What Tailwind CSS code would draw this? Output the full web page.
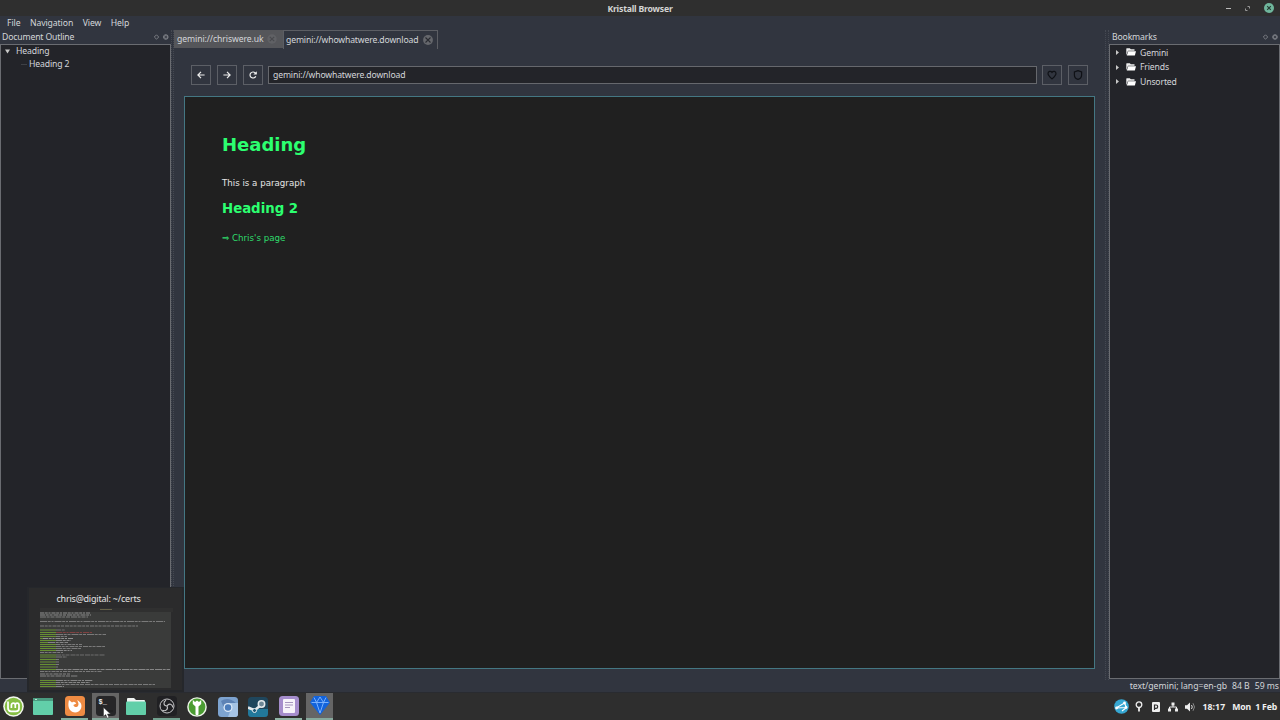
<!DOCTYPE html>
<html lang="en">

<head>
    <meta charset="UTF-8">
    <meta name="viewport" content="width=device-width, initial-scale=1.0">
    <title>Kristall Browser</title>
    <script src="https://cdn.jsdelivr.net/npm/@tailwindcss/browser@4"></script>
</head>

<body class="relative w-[1280px] h-[720px] overflow-hidden flex flex-col bg-[#31353f] text-[#d3d5d9] font-['Noto_Sans',sans-serif] text-[8.67px] tracking-[-0.15px] leading-none whitespace-nowrap">
    <!-- title bar -->
    <header class="h-4 shrink-0 grid grid-cols-3 items-center bg-[#2f2f2f]">
        <div></div>
        <h1 class="pt-[2px] text-center font-bold tracking-[-0.2px] text-[#d4d4d4]">Kristall Browser</h1>
        <div class="flex justify-end items-center gap-[13px] pr-[6px]">
            <div class="w-[5px] h-px bg-[#bbb]"></div>
            <svg class="w-[7px] h-[7px]" viewBox="0 0 7 7" fill="none" stroke="#999"><path d="M3.5 1.5h2v2M1.5 3.500v2h2" /></svg>
            <svg class="w-[10px] h-[10px]" viewBox="0 0 10 10"><circle cx="5" cy="5" r="5" fill="#6fb69c" /><path d="M3.2 3.2l3.6 3.6M6.8 3.2L3.2 6.8" stroke="#263c34" stroke-width="1.2" /></svg>
        </div>
    </header>
    <!-- menu -->
    <nav class="h-[14px] shrink-0 flex items-center gap-[9.5px] pl-[7px] pt-px tracking-[-0.1px]">
        <span>File</span>
        <span>Navigation</span>
        <span>View</span>
        <span>Help</span>
    </nav>

    <main class="h-[650px] shrink-0 flex">
        <!-- outline dock -->
        <aside class="w-[171px] flex flex-col">
            <div class="h-[14px] flex items-center pl-[2px] pr-[2px]">
                <span class="grow">Document Outline</span>
                <svg class="w-[15px] h-[6px]" viewBox="0 0 15 6" fill="none" stroke="#8b8e94" stroke-width=".8"><path d="M2.500 .8L4.700 3L2.500 5.200L.3 3Z" /><circle cx="11.800" cy="3" r="2.300" fill="#686b72" /><path d="M10.600 1.800l2.400 2.400m0-2.400l-2.400 2.400" stroke="#31353f" /></svg>
            </div>
            <div class="h-[635px] border border-[#6a6c71] bg-[#232429]">
                <div class="h-[12px] flex items-center pl-[4px] gap-[6px]">
                    <svg class="w-[5px] h-[5px]" viewBox="0 0 5 5"><path d="M0 .5h5L2.5 4.5z" fill="#c8c8c8" /></svg>
                    <span>Heading</span>
                </div>
                <div class="h-[14px] flex items-center pl-[20px] gap-[2px] pt-px">
                    <div class="w-[6px] h-px bg-[#3e4045]"></div>
                    <span>Heading 2</span>
                </div>
            </div>
        </aside>
        <div class="w-[3px] border-x border-dotted border-[#454952]"></div>

        <!-- browser -->
        <section class="w-[931px] flex flex-col">
            <div class="h-[20px] flex">
                <div class="w-[109px] h-[18px] flex items-center justify-between pl-[3px] pr-[6px] bg-[#55565a]">
                    <span class="tracking-[-0.1px]">gemini://chriswere.uk</span>
                    <svg class="shrink-0 w-[10px] h-[10px]" viewBox="0 0 10 10"><circle cx="5" cy="5" r="4.7" fill="#606165" /><path d="M2.8 2.8l4.4 4.4M7.2 2.8L2.8 7.2" stroke="#494a4e" stroke-width="1.2" /></svg>
                </div>
                <div class="w-[155px] h-[19px] flex items-center justify-between pl-[2px] pr-[4px] pb-px border-x border-t border-[#5c5e64]">
                    <span class="pt-px">gemini://whowhatwere.download</span>
                    <svg class="shrink-0 w-[10px] h-[10px]" viewBox="0 0 10 10"><circle cx="5" cy="5" r="4.9" fill="#65676c" /><path d="M2.5 2.5l5 5M7.5 2.5l-5 5" stroke="#292b31" stroke-width="1.1" /></svg>
                </div>
            </div>
            <div class="h-[46px] flex items-center pl-[17px] pr-[17px] pt-[4px] pb-px gap-[6px]">
                <button class="w-5 h-5 shrink-0 flex items-center justify-center border border-[#5c5f66]">
                    <svg class="w-[8px] h-[8px]" viewBox="0 0 8 8" fill="none" stroke="#eee" stroke-width="1.2"><path d="M7.6 4H1M4 .9L.9 4L4 7.1" /></svg>
                </button>
                <button class="w-5 h-5 shrink-0 flex items-center justify-center border border-[#5c5f66]">
                    <svg class="w-[8px] h-[8px]" viewBox="0 0 8 8" fill="none" stroke="#eee" stroke-width="1.2"><path d="M.4 4H7M4 .9L7.1 4L4 7.1" /></svg>
                </button>
                <button class="w-5 h-5 shrink-0 flex items-center justify-center border border-[#5c5f66]">
                    <svg class="w-[8px] h-[8px]" viewBox="0 0 8 8" fill="none" stroke="#eee" stroke-width="1.2"><path d="M6.8 5.2A3 3 0 1 1 6.2 1.9L7 2.7" /><path d="M7.8 .2V3.6H4.4Z" fill="#eee" stroke="none" /></svg>
                </button>
                <div class="grow h-[18px] -ml-px -mr-px flex items-center pl-[4px] pt-[2px] border border-[#66686d] bg-[#232429]">gemini://whowhatwere.download</div>
                <button class="w-5 h-5 shrink-0 flex items-center justify-center border border-[#5c5f66]">
                    <svg class="shrink-0 w-[10px] h-[10px]" viewBox="0 0 10 10" fill="none" stroke="#0f1116" stroke-width="1.2"><path d="M5 8.9C2.5 6.8 1 5.4 1 3.5C1 1.2 3.8 .6 5 2.4C6.2 .6 9 1.2 9 3.5C9 5.4 7.5 6.8 5 8.900Z" /></svg>
                </button>
                <button class="w-5 h-5 shrink-0 flex items-center justify-center border border-[#5c5f66]">
                    <svg class="shrink-0 w-[10px] h-[10px]" viewBox="0 0 10 10" fill="none" stroke="#0f1116" stroke-width="1.2"><path d="M5 .6L8.6 1.9V5C8.6 7.2 7 8.8 5 9.4C3 8.8 1.4 7.2 1.4 5V1.9Z" /></svg>
                </button>
            </div>
            <article class="w-[911px] h-[573px] ml-[10px] pl-[37px] border border-[#447783] bg-[#202020] font-['DejaVu_Sans',sans-serif] tracking-normal">
                <h1 class="mt-[37px] text-[18px] leading-[22px] font-bold text-[#2cff70]">Heading</h1>
                <p class="mt-[21px] text-[8.67px] leading-[12px] text-[#e6e6e6]">This is a paragraph</p>
                <h2 class="mt-[11px] text-[13.3px] leading-[17px] font-bold text-[#2cff70]">Heading 2</h2>
                <a class="block mt-[15px] text-[8.67px] leading-[12px] text-[#2fdc6c]">⇒ Chris's page</a>
            </article>
        </section>
        <div class="w-[4px] border-x border-dotted border-[#454952]"></div>

        <!-- bookmarks dock -->
        <aside class="w-[171px] flex flex-col">
            <div class="h-[14px] flex items-center pl-[3px]">
                <span class="grow">Bookmarks</span>
                <svg class="w-[19px] h-[6px]" viewBox="0 0 19 6" fill="none" stroke="#8b8e94" stroke-width=".8"><path d="M4.500 .8L6.700 3L4.500 5.200L2.300 3Z" /><circle cx="14" cy="3" r="2.300" fill="#686b72" /><path d="M12.800 1.800l2.400 2.400m0-2.400l-2.400 2.400" stroke="#31353f" /></svg>
            </div>
            <ul id="bookmarks" class="h-[635px] border border-[#6a6c71] bg-[#232429]"></ul>
        </aside>
    </main>

    <footer class="h-[12px] shrink-0 flex items-center justify-end gap-[5px] pt-px pr-px tracking-[-0.02px]">
        <span>text/gemini; lang=en-gb</span>
        <span>84 B</span>
        <span>59 ms</span>
    </footer>

    <!-- panel -->
    <div class="h-[28px] shrink-0 flex items-center justify-between bg-[#2e2e2e] border-t border-[#292b30]">
        <div class="h-full flex items-stretch">
            <div class="w-[28px] flex items-center justify-center pr-[2px]">
                <svg class="w-[21px] h-[21px]" viewBox="0 0 21 21"><circle cx="10.5" cy="10.5" r="10.3" fill="#f3f7ee" /><circle cx="10.5" cy="10.5" r="8.8" fill="#86be43" /><path d="M5 5.5V12C5 14.3 6.3 15.3 8 15.3H13C15 15.3 16 14.2 16 12.4V9.2C16 6.3 12.3 6.3 12.3 9.2V12M12.3 9.2C12.3 6.3 8.4 6.3 8.4 9.2V12" fill="none" stroke="#fff" stroke-width="1.7" /></svg>
            </div>
            <div class="w-[33px] flex items-center justify-center pr-[4px]">
                <svg class="w-[20px] h-[17px]" viewBox="0 0 20 17"><rect width="20" height="17" rx="1" fill="#62cfa9" /><path d="M0 1a1 1 0 0 1 1-1h18a1 1 0 0 1 1 1v2H0z" fill="#4a9b80" /><path d="M2 1.5h2" stroke="#bde7d8" /></svg>
            </div>
            <div class="w-[27px] flex items-center justify-center border-b-2 border-[#7fae9c]">
                <svg class="w-[20px] h-[20px]" viewBox="0 0 20 20"><rect width="20" height="20" rx="3.5" fill="#ee8b43" /><path d="M4 4L7 6.4C9 5.2 10 6.2 11.3 7.4L8.3 9C9 11.2 12 12 13.2 9.5C14 7.8 13.2 6 12 4.2C15.8 5.6 17.4 9 16 12.5C14.4 16.5 9 17.7 5.8 14.8C3 12.2 3 8.2 4 4Z" fill="#fff" /></svg>
            </div>
            <div class="w-[27px] ml-[4px] flex items-center justify-center bg-[#656565] border-b-2 border-[#86a99c]">
                <svg class="w-[20px] h-[20px]" viewBox="0 0 20 20"><rect width="20" height="20" rx="3.5" fill="#262628" /><path d="M7 15h10" stroke="#1c1c1d" /><text x="2.6" y="7.8" font-family="Liberation Mono, monospace" font-size="7" font-weight="bold" fill="#eee">$_</text></svg>
            </div>
            <div class="w-[34px] flex items-center justify-center">
                <svg class="w-[20px] h-[17px]" viewBox="0 0 20 17"><path d="M1 1Q1 0 2 0H8L10 2H18Q19 2 19 3V8H1Z" fill="#f1f5f3" /><rect y="3.5" width="20" height="13.5" rx="1" fill="#62cfa9" /></svg>
            </div>
            <div class="w-[27px] flex items-center justify-center border-b-2 border-[#72a18f]">
                <svg class="w-[20px] h-[20px]" viewBox="0 0 20 20" fill="none" stroke="#c3c3c5"><rect width="20" height="20" rx="3.5" fill="#202023" stroke="none" /><circle cx="10" cy="10" r="7" /><path d="M10 10C6.3 9.8 6 6 9 4.2M10 10C12 6.8 15.6 8.2 15.8 11.5M10 10C11.6 13.3 8.5 15.8 5.3 14.2" stroke-width="1.1" /></svg>
            </div>
            <div class="w-[34px] flex items-center justify-center">
                <svg class="w-[20px] h-[20px]" viewBox="0 0 20 20"><circle cx="10" cy="10" r="9.8" fill="#edf4e8" /><circle cx="10" cy="10" r="8.4" fill="#4b9c32" /><path d="M5.8 3L8 5L10 3.4L12 5L14.2 3V7L11.5 9.5V17.5L10 18.8L8.5 17.5V9.5L5.8 7Z" fill="#fff" /></svg>
            </div>
            <div class="w-[27px] flex items-center justify-center">
                <svg class="w-[20px] h-[20px]" viewBox="0 0 20 20"><rect width="20" height="20" rx="3.5" fill="#7da3cf" /><path d="M3 4Q10 -1 18 6H10Q6 6 5.5 10Z" fill="#5e83b5" /><path d="M13 12L10 20H17Q20 20 20 17V6H10Z" fill="#a5c3e4" /><circle cx="10" cy="10.5" r="4.5" fill="#dbe8f6" /><circle cx="10" cy="10.5" r="3.2" fill="#4d7dbb" /></svg>
            </div>
            <div class="w-[34px] flex items-center justify-center">
                <svg class="w-[20px] h-[20px]" viewBox="0 0 20 20"><rect width="20" height="20" rx="3.5" fill="#1f465c" /><path d="M0 12H20V16.5Q20 20 16.5 20H3.5Q0 20 0 16.5Z" fill="#22789a" /><path d="M0 10.5L6 13M7.5 12.5L12.5 8.5" stroke="#e4e9ec" stroke-width="2.6" /><circle cx="6.5" cy="13.5" r="2" fill="#1d5773" stroke="#e4e9ec" /><circle cx="13.5" cy="7" r="3.2" fill="#6d8796" stroke="#e4e9ec" stroke-width="1.5" /></svg>
            </div>
            <div class="w-[27px] flex items-center justify-center border-b-2 border-[#8fb4a5]">
                <svg class="w-[20px] h-[20px]" viewBox="0 0 20 20"><rect width="20" height="20" rx="3.5" fill="#a58dcc" /><rect x="4" y="3" width="12" height="14" rx="1" fill="#f6f3fa" /><path d="M6 6.5h8M6 9h8M6 11.5h5" stroke="#a595bd" /></svg>
            </div>
            <div class="w-[27px] ml-[4px] flex items-center justify-center bg-[#656565] border-b-2 border-[#86a99c]">
                <svg class="w-[20px] h-[19px]" viewBox="0 0 20 19"><path d="M4 0H16L20 6.5L10 19L0 6.5Z" fill="#1263dc" /><path d="M1.5 6.5H18.5M4 1.5L6.5 6.5L10 1L13.5 6.5L16 1.5M6.5 6.5L10 17L13.5 6.5" fill="none" stroke="#83b8ff" stroke-width=".9" /></svg>
            </div>
        </div>
        <div class="flex items-center pr-[3px] font-bold text-[#f0f0f0]">
            <svg class="w-[15px] h-[15px] mr-[6px]" viewBox="0 0 15 15"><circle cx="7.5" cy="7.5" r="7.3" fill="#36a7d2" /><path d="M2 9L10.5 4L12.5 8.5ZM12.5 8.5L8 12" fill="none" stroke="#fff" stroke-width="1.1" /><circle cx="10.5" cy="4" r="1.4" fill="#fff" /><circle cx="2.6" cy="9" r="1.4" fill="#fff" /><circle cx="12" cy="8.5" r="1.4" fill="#fff" /></svg>
            <svg class="w-[8px] h-[11px] mr-[9px]" viewBox="0 0 8 11" fill="none" stroke="#eee" stroke-width="1.3"><circle cx="4" cy="3.7" r="2.8" /><path d="M4 6.5V10.5" stroke-width="1.8" /></svg>
            <svg class="w-[8px] h-[10px] mr-[8px]" viewBox="0 0 8 10"><rect width="8" height="10" rx="1" fill="#eee" /><path d="M2.5 8V3H4A1.7 1.7 0 0 1 4 6.4H2.5" fill="none" stroke="#2e2e2e" stroke-width="1.2" /></svg>
            <svg class="w-[10px] h-[10px] mr-[7px]" viewBox="0 0 10 10"><path d="M3.5 .5h3v3h-3zM0 6.5h3v3H0zM7 6.5h3v3H7z" fill="#eee" /><path d="M5 3V5M1.5 7V5H8.5V7" fill="none" stroke="#eee" /></svg>
            <svg class="w-[11px] h-[10px] mr-[6px]" viewBox="0 0 11 10"><path d="M0 3.2H2L5 .5V9.5L2 6.8H0Z" fill="#eee" /><path d="M6.5 3Q8 5 6.5 7" fill="none" stroke="#ddd" /><path d="M8 1.2Q11 5 8 8.8" fill="none" stroke="#888" /></svg>
            <span class="mr-[7px] pt-[2px] tracking-[0.1px]">18:17</span>
            <span class="pt-[2px]">Mon&nbsp; 1 Feb</span>
        </div>
    </div>

    <!-- window preview over the panel -->
    <div class="absolute left-[27px] top-[587px] w-[157px] h-[105px] bg-[#25272b] px-[2px] pt-[1px]">
        <div class="h-[102px] flex flex-col items-center bg-[#2b2b2c]">
            <div class="h-[20px] flex items-center pr-[14px] text-[9px] tracking-[-0.2px] text-[#e4e4e4]">chris@digital: ~/certs</div>
            <svg class="w-[133px] h-[81px] ml-[2px]" viewBox="0 0 133 81">
                <rect width="133" height="4" fill="#303030" />
                <path d="M60 1.5h12" stroke="#76704f" stroke-width=".8" />
                <rect y="4" width="131" height="76" fill="#3a3b3a" />
                <g id="terminal" opacity=".85"></g>
            </svg>
        </div>
    </div>

    <svg class="absolute left-[103px] top-[707px] w-[8px] h-[12px]" viewBox="0 0 8 12"><path d="M.5 .5V9.5L2.7 7.6L4.2 11.2L6 10.4L4.5 7H7.5Z" fill="#fff" stroke="#333" stroke-width=".5" /></svg>

    <script>
        const bookmarks = document.getElementById('bookmarks');
        const terminal = document.getElementById('terminal');

        ['Gemini', 'Friends', 'Unsorted'].forEach(name => {
            const item = document.createElement('li');
            item.className = 'h-[14.7px] flex items-center pl-[6px]';
            item.innerHTML = `
                <svg class="w-[3px] h-[5px] mr-[7px]" viewBox="0 0 3 5"><path d="M0 0L3 2.5L0 5z" fill="#c8c8c8" /></svg>
                <svg class="w-[10px] h-[8px] mr-[4px]" viewBox="0 0 10 8"><path d="M.3 7.2V.8Q.3 .3 .8 .3H3.8L4.8 1.3H8.5V2.7H2L.8 6Z" fill="#eee" /><path d="M2.2 3.2H10L8.8 7.5H.8Z" fill="#fff" /></svg>
                <span class="pt-px">${name}</span>`;
            bookmarks.appendChild(item);
        });

        // [y, prompt width, text end, color]
        const lines = [
            [5, 0, 50, '#b5b5b5'], [7, 0, 51, '#b5b5b5'], [9, 0, 48, '#a0a0a0'],
            [13.5, 0, 125, '#999'], [18, 0, 98, '#999'], [22, 16, 25, '#888'],
            [24.5, 16, 52, '#a34545'], [26.5, 16, 66, '#999'], [28.5, 16, 27, '#999'],
            [30.5, 3, 33, '#bbb'], [32.5, 16, 31, '#aaa'], [34.5, 8, 28, '#aaa'],
            [36.5, 16, 42, '#999'], [38.5, 16, 65, '#999'], [40.5, 16, 41, '#999'],
            [42.5, 16, 32, '#aaa'], [44.5, 0, 23, '#999'], [47, 16, 65, '#888'],
            [49, 16, 27, '#999'], [51.5, 16, 19, '#999'], [54, 16, 19, '#999'],
            [56.5, 16, 19, '#999'], [59, 16, 18, '#999'], [61.5, 16, 130, '#aaa'],
            [63.5, 0, 62, '#999'], [66, 0, 30, '#aaa'], [68, 0, 38, '#aaa'],
            [72.5, 16, 53, '#aaa'], [74.5, 16, 50, '#aaa'], [76.5, 16, 115, '#999'],
            [78.5, 16, 24, '#aaa']
        ];
        let strokes = '';
        lines.forEach(([y, prompt, end, color], i) => {
            if (prompt) {
                strokes += `<path d="M0 ${y}H${prompt}" stroke="#6f9e32" stroke-width="1" />`;
            }
            strokes += `<path d="M${prompt} ${y}H${end}" stroke="${color}" stroke-width=".8" stroke-dasharray="${4 + i % 4} .7 3 .8 ${2 + i % 3} 1" />`;
        });
        terminal.innerHTML = strokes;
    </script>
</body>

</html>
